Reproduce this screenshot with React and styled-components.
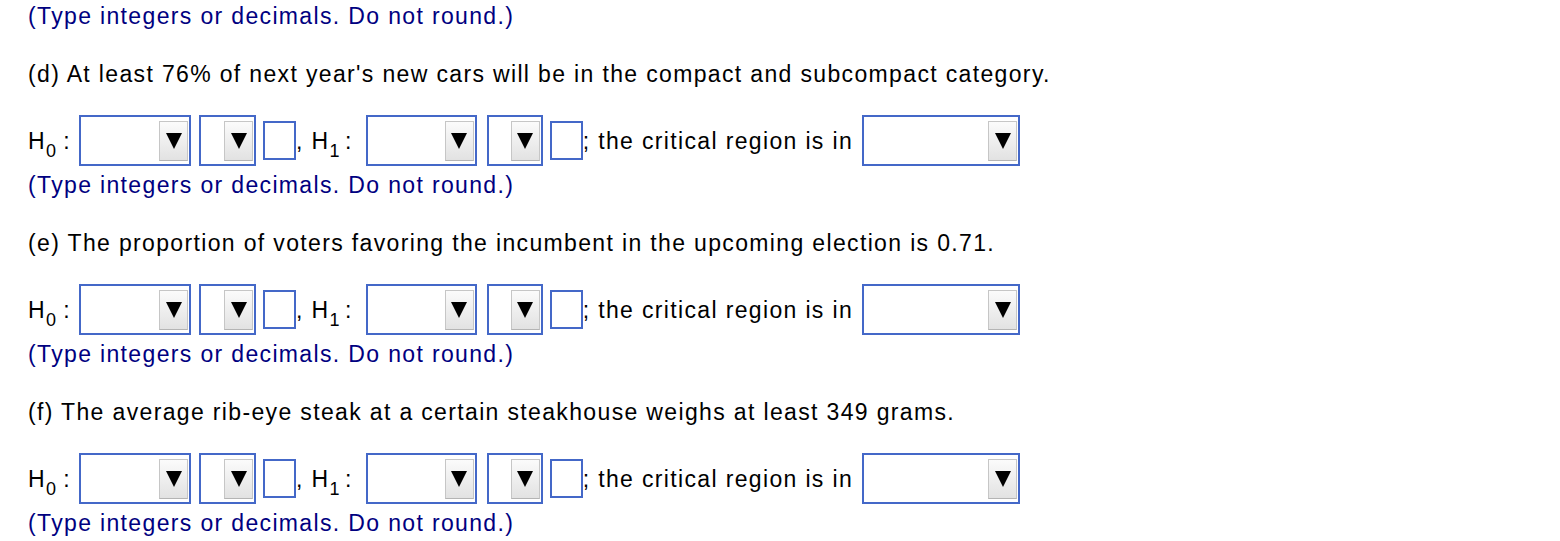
import React from 'react';
import styled, { createGlobalStyle } from 'styled-components';

const GlobalStyle = createGlobalStyle`
  body {
    margin: 0;
    background: #ffffff;
    font-family: "Liberation Sans", Arial, sans-serif;
    color: #000000;
  }
`;

const Page = styled.div`
  padding: 2px 0 0 28px;
  font-size: 23px;
  line-height: 28px;
  letter-spacing: 1.35px;
`;

const Hint = styled.div`
  color: #000080;
`;

const Question = styled.div`
  margin-top: 30px;
`;

const Row = styled.div`
  display: flex;
  align-items: center;
  height: 51px;
  margin-top: 27px;
  margin-bottom: 5px;
  white-space: pre;
`;

const Label = styled.span``;

const Sub = styled.sub`
  font-size: 18px;
  line-height: 0;
  vertical-align: -8px;
  margin-right: ${({ $gap }) => $gap || 0}px;
`;

const Select = styled.div`
  box-sizing: border-box;
  width: ${({ $w }) => $w}px;
  height: 51px;
  margin-left: ${({ $left }) => $left || 0}px;
  border: 2px solid #4468c8;
  background: #ffffff;
  display: flex;
  align-items: center;
  justify-content: flex-end;
  padding-right: 1px;
`;

const ArrowButton = styled.div`
  box-sizing: border-box;
  width: 29px;
  height: 40px;
  border: 1px solid #c6c6c6;
  border-bottom-color: #b4b4b4;
  background: linear-gradient(#fbfbfb, #e2e2e2);
  display: flex;
  align-items: center;
  justify-content: center;
`;

const Triangle = styled.span`
  width: 0;
  height: 0;
  border-left: 8.5px solid transparent;
  border-right: 8.5px solid transparent;
  border-top: 16px solid #000000;
`;

const Box = styled.div`
  box-sizing: border-box;
  width: 33px;
  height: 39px;
  margin-left: ${({ $left }) => $left || 0}px;
  border: 2px solid #4468c8;
  background: #ffffff;
`;

const Dropdown = ({ w, left }) => (
  <Select $w={w} $left={left}>
    <ArrowButton>
      <Triangle />
    </ArrowButton>
  </Select>
);

const HypothesisRow = () => (
  <Row>
    <Label>
      H<Sub $gap={6}>0</Sub>:
    </Label>
    <Dropdown w={112} left={8} />
    <Dropdown w={57} left={8} />
    <Box $left={7} />
    <Label>
      , H<Sub $gap={4}>1</Sub>:
    </Label>
    <Dropdown w={111} left={13} />
    <Dropdown w={56} left={10} />
    <Box $left={7} />
    <Label>; the critical region is in</Label>
    <Dropdown w={158} left={9} />
  </Row>
);

const hintText = '(Type integers or decimals. Do not round.)';

const questions = [
  "(d) At least 76% of next year's new cars will be in the compact and subcompact category.",
  '(e) The proportion of voters favoring the incumbent in the upcoming election is 0.71.',
  '(f) The average rib-eye steak at a certain steakhouse weighs at least 349 grams.',
];

export default function App() {
  return (
    <>
      <GlobalStyle />
      <Page>
        <Hint>{hintText}</Hint>
        {questions.map((q) => (
          <div key={q}>
            <Question>{q}</Question>
            <HypothesisRow />
            <Hint>{hintText}</Hint>
          </div>
        ))}
      </Page>
    </>
  );
}
